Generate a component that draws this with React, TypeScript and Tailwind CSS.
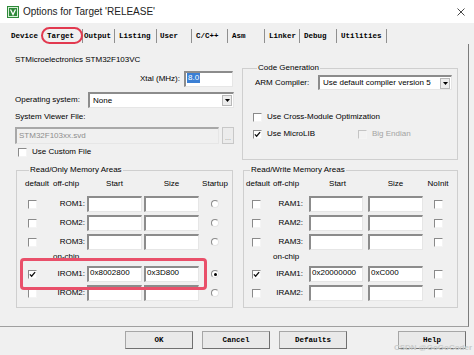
import type { ReactNode } from "react";

const tabs = [
  { label: "Device", cls: "w-[31px] pl-[2px]", sep: false },
  { label: "Target", cls: "w-[43px] pl-[7px]", sep: true, active: true },
  { label: "Output", cls: "w-[32px] pl-[1px]", sep: true },
  { label: "Listing", cls: "w-[42px] pl-[4px]", sep: true },
  { label: "User", cls: "w-[35px] pl-[3px]", sep: true },
  { label: "C/C++", cls: "w-[36px] pl-[4px]", sep: true },
  { label: "Asm", cls: "w-[37px] pl-[4px]", sep: true },
  { label: "Linker", cls: "w-[35px] pl-[4px]", sep: true },
  { label: "Debug", cls: "w-[37px] pl-[4px]", sep: true },
  { label: "Utilities", cls: "w-[50px] pl-[4px]", sep: true },
];

const romRows = [
  { name: "ROM1:", def: false, start: "", size: "", startup: false },
  { name: "ROM2:", def: false, start: "", size: "", startup: false },
  { name: "ROM3:", def: false, start: "", size: "", startup: false },
];
const ramRows = [
  { name: "RAM1:", def: false, start: "", size: "" },
  { name: "RAM2:", def: false, start: "", size: "" },
  { name: "RAM3:", def: false, start: "", size: "" },
];

const KeilIcon = () => (
  <svg viewBox="0 0 12 12" className="h-[12px] w-[12px] shrink-0">
    <rect x="0" y="0" width="12" height="12" fill="#2f8a3a" />
    <rect x="1.5" y="1.5" width="9" height="9" fill="none" stroke="#d9f0d9" strokeWidth="1" />
    <path d="M3.5 3.5 L6 8.5 L8.5 3.5" fill="none" stroke="#ffffff" strokeWidth="1.3" />
  </svg>
);

const Check = ({ checked = false, disabled = false }: { checked?: boolean; disabled?: boolean }) => (
  <span
    className={`flex h-[9px] w-[9px] shrink-0 items-center justify-center border border-b-[#f4f4f4] border-r-[#f4f4f4] ${
      disabled ? "border-l-[#c4c4c4] border-t-[#c4c4c4] bg-[#f2f2f2]" : "border-l-[#8a8a8a] border-t-[#8a8a8a] bg-white"
    }`}
  >
    {checked && (
      <svg viewBox="0 0 8 8" className="h-[7px] w-[7px]">
        <path d="M1 3.8 L3 6 L7 1.2" stroke="#111" strokeWidth="1.5" fill="none" />
      </svg>
    )}
  </span>
);

const Radio = ({ checked = false }: { checked?: boolean }) => (
  <span className="flex h-[8px] w-[8px] items-center justify-center rounded-full border border-b-[#e4e4e4] border-l-[#8a8a8a] border-r-[#e4e4e4] border-t-[#8a8a8a] bg-white">
    {checked && <span className="h-[3px] w-[3px] rounded-full bg-black" />}
  </span>
);

const Field = ({ children, className = "" }: { children?: ReactNode; className?: string }) => (
  <div
    className={`flex h-[16px] items-start overflow-hidden border-b border-l-2 border-r border-t-2 border-b-[#e6e6e6] border-l-[#8c8c8c] border-r-[#e6e6e6] border-t-[#8c8c8c] bg-white pl-[1px] leading-[10px] ${className}`}
  >
    {children}
  </div>
);

const Select = ({ value, className = "" }: { value: string; className?: string }) => (
  <div
    className={`flex h-full items-center border-b border-l-2 border-r border-t-2 border-b-[#e6e6e6] border-l-[#8c8c8c] border-r-[#e6e6e6] border-t-[#8c8c8c] bg-white ${className}`}
  >
    <span className="flex-1 pl-[3px]">{value}</span>
    <span className="mr-[1px] flex h-[11px] w-[10px] items-center justify-center border border-[#b8b8b8] bg-[#ececec]">
      <svg viewBox="0 0 5 3" className="h-[3px] w-[5px]">
        <path d="M0 0 H5 L2.5 3 Z" fill="#000" />
      </svg>
    </span>
  </div>
);

const Group = ({ title, className, children }: { title: string; className: string; children: ReactNode }) => (
  <fieldset className={`border border-[#cfcfcf] ${className}`}>
    <legend className="ml-[4px] px-[1px] leading-[10px]">{title}</legend>
    {children}
  </fieldset>
);

const Button = ({ label }: { label: string }) => (
  <div className="flex h-[18px] w-[68px] items-center justify-center border border-[#a6a6a6] border-b-[#707070] border-r-[#707070] bg-[#e9e9e9] font-['Liberation_Mono',monospace] text-[7.5px] font-bold">
    {label}
  </div>
);

export default function App() {
  return (
    <div className="relative flex h-[355px] w-[474px] flex-col overflow-hidden bg-[#f0f0f0] font-['Liberation_Sans',Arial,sans-serif] text-[8px] leading-[12px] text-black">
      {/* title bar */}
      <div className="flex h-[23px] shrink-0 items-center bg-white pl-[7px] pr-[9px]">
        <KeilIcon />
        <span className="ml-[4px] text-[10px] text-[#222]">Options for Target 'RELEASE'</span>
        <svg viewBox="0 0 8 8" className="ml-auto h-[8px] w-[8px]">
          <path d="M0.5 0.5 L7.5 7.5 M7.5 0.5 L0.5 7.5" stroke="#333" strokeWidth="0.9" />
        </svg>
      </div>

      {/* tabs */}
      <div className="flex h-[21px] shrink-0 pl-[9px] pt-[6px]">
        {tabs.map((t) => (
          <div
            key={t.label}
            className={`relative h-[14px] shrink-0 font-['Liberation_Mono',monospace] text-[7.5px] font-bold leading-[14px] ${t.cls} ${
              t.sep ? "border-r border-[#8f8f8f]" : ""
            }`}
          >
            {t.label}
            {t.active && (
              <span className="absolute left-[1px] top-[-2px] h-[17px] w-[42px] rounded-full border-2 border-[#e2394f]" />
            )}
          </div>
        ))}
      </div>

      {/* panel */}
      <div className="h-[283px] w-[469px] shrink-0 border-b border-r border-b-[#a0a0a0] border-r-[#7c7c7c]">
        <div className="flex h-[121px] pl-[15px] pt-[10px]">
          <div className="flex w-[220px] flex-col">
            <div className="h-[12px]">STMicroelectronics STM32F103VC</div>
            <div className="mt-[5px] flex h-[16px] w-[218px] items-center">
              <span className="flex-1 text-right">Xtal (MHz):</span>
              <Field className="ml-[4px] w-[49px] items-center">
                <span className="bg-[#3b7fd4] px-[1px] text-white">8.0</span>
              </Field>
            </div>
            <div className="mt-[5px] flex h-[16px] items-center">
              <span className="w-[73px]">Operating system:</span>
              <Select value="None" className="w-[146px]" />
            </div>
            <div className="mt-[3px] h-[12px]">System Viewer File:</div>
            <div className="mt-[4px] flex h-[17px]">
              <div className="flex h-full w-[204px] items-center border-b border-l-2 border-r border-t-2 border-b-[#e6e6e6] border-l-[#a8a8a8] border-r-[#e6e6e6] border-t-[#a8a8a8] bg-[#f0f0f0] pl-[2px] text-[#8d8d8d]">
                STM32F103xx.svd
              </div>
              <div className="ml-[3px] flex h-full w-[12px] items-end justify-center border border-[#c8c8c8] bg-[#ececec] pb-[2px] text-[7px] leading-[7px] text-[#8d8d8d]">
                ...
              </div>
            </div>
            <div className="mt-[2px] flex h-[12px] items-center pl-[3px]">
              <Check />
              <span className="ml-[5px]">Use Custom File</span>
            </div>
          </div>

          <Group title="Code Generation" className="ml-[7px] mt-[9px] h-[97px] w-[216px] pl-[10px]">
            <div className="mt-[2px] flex h-[15px] items-center pl-[2px]">
              <span className="w-[63px]">ARM Compiler:</span>
              <Select value="Use default compiler version 5" className="w-[134px]" />
            </div>
            <div className="mt-[21px] flex h-[12px] items-center">
              <Check />
              <span className="ml-[5px]">Use Cross-Module Optimization</span>
            </div>
            <div className="mt-[5px] flex h-[12px] items-center">
              <div className="flex w-[105px] items-center">
                <Check checked />
                <span className="ml-[5px]">Use MicroLIB</span>
              </div>
              <Check disabled />
              <span className="ml-[5px] text-[#a3a3a3]">Big Endian</span>
            </div>
          </Group>
        </div>

        <div className="flex pl-[16px]">
          {/* read only */}
          <Group title="Read/Only Memory Areas" className="relative h-[143px] w-[217px] pl-[8px]">
            <div className="mt-[3px] grid h-[12px] grid-cols-[26px_35px_57px_57px_30px]">
              <span>default</span>
              <span className="pl-[2px]">off-chip</span>
              <span className="text-center">Start</span>
              <span className="text-center">Size</span>
              <span className="text-center">Startup</span>
            </div>
            <div className="mt-[6px] flex flex-col gap-[3px]">
              {romRows.map((r) => (
                <div key={r.name} className="grid h-[16px] grid-cols-[26px_35px_57px_57px_30px] items-center">
                  <span className="pl-[3px]">
                    <Check checked={r.def} />
                  </span>
                  <span className="pr-[1px] text-right">{r.name}</span>
                  <Field className="ml-[1px] w-[55px]">{r.start}</Field>
                  <Field className="ml-[1px] w-[55px]">{r.size}</Field>
                  <span className="flex justify-center">
                    <Radio checked={r.startup} />
                  </span>
                </div>
              ))}
            </div>
            <div className="mt-[1px] grid h-[13px] grid-cols-[26px_35px_57px_57px_30px]">
              <span />
              <span className="pl-[2px]">on-chip</span>
            </div>
            <div className="mt-[2px] flex flex-col gap-[3px]">
              <div className="grid h-[16px] grid-cols-[26px_35px_57px_57px_30px] items-center">
                <span className="pl-[3px]">
                  <Check checked />
                </span>
                <span className="pr-[1px] text-right">IROM1:</span>
                <Field className="ml-[1px] w-[55px]">0x8002800</Field>
                <Field className="ml-[1px] w-[55px]">0x3D800</Field>
                <span className="flex justify-center">
                  <Radio checked />
                </span>
              </div>
              <div className="grid h-[16px] grid-cols-[26px_35px_57px_57px_30px] items-center">
                <span className="pl-[3px]">
                  <Check />
                </span>
                <span className="pr-[1px] text-right">IROM2:</span>
                <Field className="ml-[1px] w-[55px]" />
                <Field className="ml-[1px] w-[55px]" />
                <span className="flex justify-center">
                  <Radio />
                </span>
              </div>
            </div>
            {/* annotation */}
            <span className="absolute left-[3px] top-[83px] h-[32px] w-[187px] rounded-[4px] border-[3px] border-[#e9506a]" />
          </Group>

          {/* read write */}
          <Group title="Read/Write Memory Areas" className="ml-[10px] h-[143px] w-[215px] pl-[2px]">
            <div className="mt-[3px] grid h-[12px] grid-cols-[26px_37px_57px_59px_26px]">
              <span>default</span>
              <span className="pl-[1px]">off-chip</span>
              <span className="text-center">Start</span>
              <span className="text-center">Size</span>
              <span className="text-center">NoInit</span>
            </div>
            <div className="mt-[6px] flex flex-col gap-[3px]">
              {ramRows.map((r) => (
                <div key={r.name} className="grid h-[16px] grid-cols-[26px_37px_57px_59px_26px] items-center">
                  <span className="pl-[6px]">
                    <Check checked={r.def} />
                  </span>
                  <span className="pr-[6px] text-right">{r.name}</span>
                  <Field className="w-[54px]">{r.start}</Field>
                  <Field className="ml-[2px] w-[55px]">{r.size}</Field>
                  <span className="flex justify-center">
                    <Check />
                  </span>
                </div>
              ))}
            </div>
            <div className="mt-[1px] grid h-[13px] grid-cols-[26px_37px_57px_59px_26px]">
              <span />
              <span className="pl-[1px]">on-chip</span>
            </div>
            <div className="mt-[2px] flex flex-col gap-[3px]">
              <div className="grid h-[16px] grid-cols-[26px_37px_57px_59px_26px] items-center">
                <span className="pl-[6px]">
                  <Check checked />
                </span>
                <span className="pr-[6px] text-right">IRAM1:</span>
                <Field className="w-[54px]">0x20000000</Field>
                <Field className="ml-[2px] w-[55px]">0xC000</Field>
                <span className="flex justify-center">
                  <Check />
                </span>
              </div>
              <div className="grid h-[16px] grid-cols-[26px_37px_57px_59px_26px] items-center">
                <span className="pl-[6px]">
                  <Check />
                </span>
                <span className="pr-[6px] text-right">IRAM2:</span>
                <Field className="w-[54px]" />
                <Field className="ml-[2px] w-[55px]" />
                <span className="flex justify-center">
                  <Check />
                </span>
              </div>
            </div>
          </Group>
        </div>
      </div>

      {/* buttons */}
      <div className="flex h-[28px] shrink-0 items-start gap-[9px] pl-[125px] pt-[4px]">
        <Button label="OK" />
        <Button label="Cancel" />
        <Button label="Defaults" />
        <div className="ml-[42px]">
          <Button label="Help" />
        </div>
      </div>

      <span className="absolute bottom-[2px] right-[2px] text-[8px] font-bold leading-[10px] text-[#c9cccc]">
        CSDN @GoGoCoder
      </span>
    </div>
  );
}
